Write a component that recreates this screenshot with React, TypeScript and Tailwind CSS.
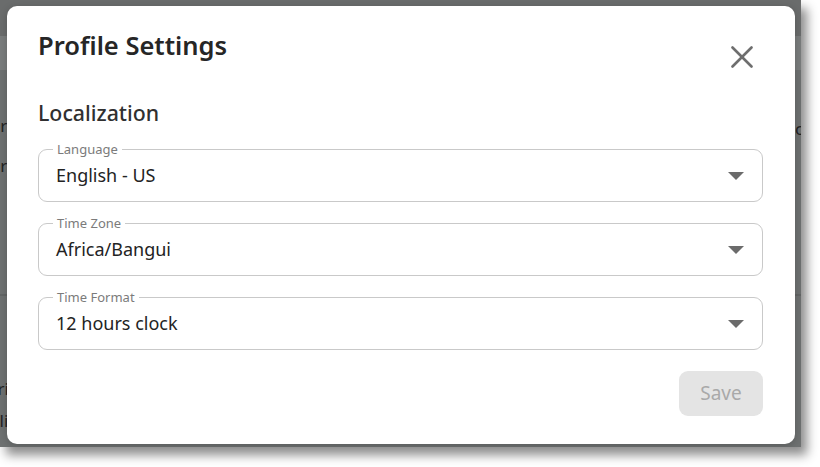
const fields = [
  { label: "Language", value: "English - US" },
  { label: "Time Zone", value: "Africa/Bangui" },
  { label: "Time Format", value: "12 hours clock" },
];

function SelectField({ label, value }: { label: string; value: string }) {
  return (
    <fieldset className="rounded-[9px] border border-[#c9c9c9] px-[14px] pb-0">
      <legend className="px-[4px] text-[13px] leading-4 text-[#7b7b7b]">{label}</legend>
      <div className="flex h-[44px] items-center justify-between pb-[7px] pl-[3px] pr-[4px]">
        <span className="text-[18px] text-[#232323]">{value}</span>
        <svg width="16" height="8" viewBox="0 0 16 8" className="mt-[1px]">
          <polygon points="0,0 16,0 8,8" fill="#6b6b6b" />
        </svg>
      </div>
    </fieldset>
  );
}

export default function App() {
  return (
    <div className="h-[467px] w-[820px] overflow-hidden bg-white" style={{ fontFamily: '"Noto Sans", "Open Sans", sans-serif' }}>
      <div className="relative h-[447px] w-[801px] overflow-hidden bg-[#6e7171] pl-[7px] pt-[6px] shadow-[6px_8px_10px_rgba(0,0,0,0.45)]">
        {/* page behind the backdrop */}
        <div className="absolute inset-x-0 top-0 h-[36px] bg-[#6a6c6c]" />
        <div className="absolute inset-x-0 top-[36px] h-[34px] bg-[#7a7d7d]" />
        <div className="absolute inset-x-0 top-[294px] h-[2px] bg-[#626565]" />
        <span className="absolute left-[-10px] top-[113px] text-[17px] text-[#222]">or</span>
        <span className="absolute left-[-10px] top-[153px] text-[17px] text-[#222]">or</span>
        <span className="absolute left-[-12px] top-[376px] text-[17px] text-[#222]">ari</span>
        <span className="absolute left-[-10px] top-[408px] text-[17px] text-[#222]">eli</span>
        <span className="absolute left-[795px] top-[116px] text-[17px] text-[#222]">c</span>

        <div className="relative flex h-[438px] w-[788px] flex-col rounded-[10px] bg-white pl-[31px] pr-[32px] pt-[23px] shadow-[0_2px_8px_rgba(0,0,0,0.2)]">
          <div className="flex items-start justify-between">
            <h1 className="text-[25.5px] font-semibold leading-8 text-[#262626]">Profile Settings</h1>
            <button className="mr-[10px] mt-[17px] text-[#6e6e6e]">
              <svg width="22" height="22" viewBox="0 0 22 22" fill="none" stroke="currentColor" strokeWidth="2.6" strokeLinecap="round">
                <line x1="1.5" y1="1.5" x2="20.5" y2="20.5" />
                <line x1="20.5" y1="1.5" x2="1.5" y2="20.5" />
              </svg>
            </button>
          </div>
          <h2 className="mt-[31px] text-[21.3px] font-medium leading-7 text-[#303030]">Localization</h2>
          <div className="mt-[14px] flex flex-col gap-[13px]">
            {fields.map((f) => (
              <SelectField key={f.label} label={f.label} value={f.value} />
            ))}
          </div>
          <div className="mt-[21px] flex justify-end">
            <button className="h-[45px] w-[84px] rounded-[9px] bg-[#e4e4e4] text-[19px] text-[#a9a9a9]">Save</button>
          </div>
        </div>
      </div>
    </div>
  );
}
